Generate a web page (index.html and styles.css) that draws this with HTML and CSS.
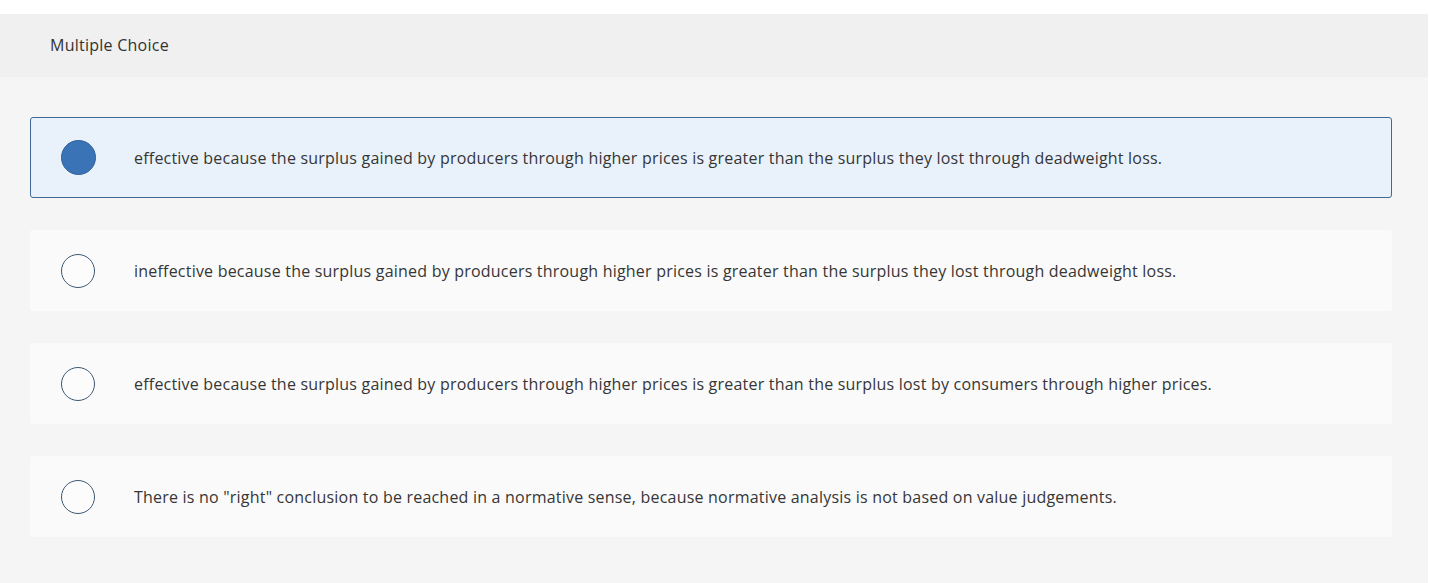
FILE: index.html
```html
<!DOCTYPE html>
<html lang="en">
<head>
<meta charset="utf-8">
<title>Multiple Choice</title>
<link rel="stylesheet" href="styles.css">
</head>
<body>
<div class="page">
  <div class="question-header">
    <span class="question-type">Multiple Choice</span>
  </div>
  <div class="question-body">
    <ul class="choices">
      <li class="choice selected">
        <span class="radio"></span>
        <span class="choice-text">effective because the surplus gained by producers through higher prices is greater than the surplus they lost through deadweight loss.</span>
      </li>
      <li class="choice">
        <span class="radio"></span>
        <span class="choice-text">ineffective because the surplus gained by producers through higher prices is greater than the surplus they lost through deadweight loss.</span>
      </li>
      <li class="choice">
        <span class="radio"></span>
        <span class="choice-text">effective because the surplus gained by producers through higher prices is greater than the surplus lost by consumers through higher prices.</span>
      </li>
      <li class="choice">
        <span class="radio"></span>
        <span class="choice-text">There is no "right" conclusion to be reached in a normative sense, because normative analysis is not based on value judgements.</span>
      </li>
    </ul>
  </div>
</div>
</body>
</html>
```
FILE: styles.css
```css
html, body {
  margin: 0;
  padding: 0;
  background: #ffffff;
}
body {
  font-family: "Open Sans", "Lato", "Liberation Sans", sans-serif;
  color: #333333;
}
.page {
  width: 1428px;
  margin-top: 14px;
}
.question-header {
  height: 63px;
  background: #f0f0f0;
  display: flex;
  align-items: center;
  padding-left: 50px;
  box-sizing: border-box;
}
.question-type {
  font-size: 16px;
  letter-spacing: 0.25px;
  color: #333333;
  position: relative;
  top: -1px;
}
.question-body {
  background: #f5f5f5;
  padding: 40px 36px 60px 30px;
}
.choices {
  list-style: none;
  margin: 0;
  padding: 0;
  display: flex;
  flex-direction: column;
  gap: 32px;
}
.choice {
  height: 81px;
  box-sizing: border-box;
  border: 1px solid transparent;
  border-radius: 3px;
  background: #fafafa;
  display: flex;
  align-items: center;
  padding-left: 30px;
}
.choice.selected {
  background: #e9f2fb;
  border-color: #3f6a93;
}
.radio {
  width: 34px;
  height: 34px;
  box-sizing: border-box;
  border-radius: 50%;
  border: 1.5px solid #3e5872;
  background: #fcfcfc;
  flex: none;
}
.choice.selected .radio {
  background: #3a73b6;
  border-color: #30609a;
  width: 35px;
  height: 35px;
}
.choice-text {
  margin-left: 39px;
  font-size: 16px;
  letter-spacing: 0.21px;
  color: #363636;
}
.choice.selected .choice-text {
  margin-left: 38px;
}
```
